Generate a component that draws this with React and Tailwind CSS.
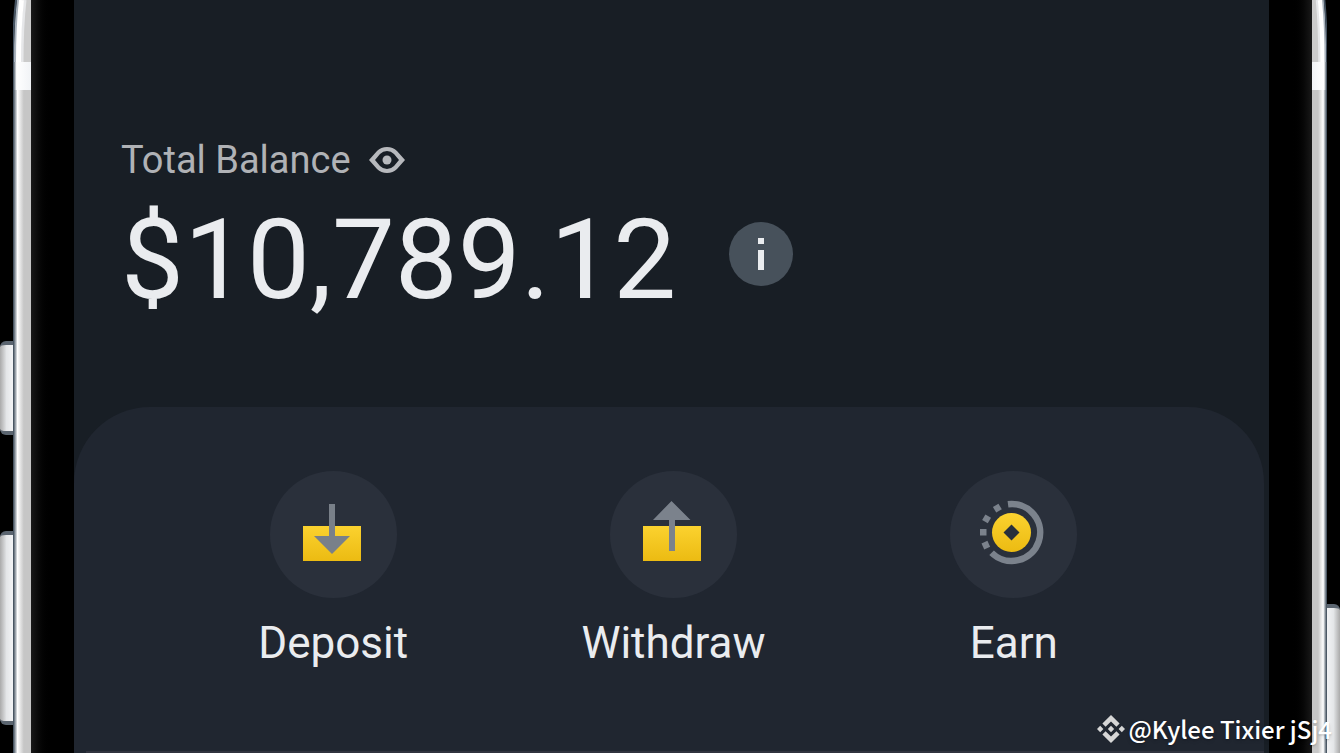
import clsx from 'clsx';

const DepositIcon = () => (
  <svg viewBox="0 0 127 127" className="w-full h-full" aria-hidden="true">
    <defs>
      <linearGradient id="deposit-gold" x1="0" y1="0" x2="0" y2="1">
        <stop offset="0" stopColor="#fbd22f" />
        <stop offset="1" stopColor="#ecbb12" />
      </linearGradient>
    </defs>
    <rect x="33" y="55" width="58" height="35" fill="url(#deposit-gold)" />
    <path d="M59 33h6v32h15L62 83 44 65h15z" fill="#798089" />
  </svg>
);

const WithdrawIcon = () => (
  <svg viewBox="0 0 127 127" className="w-full h-full" aria-hidden="true">
    <defs>
      <linearGradient id="withdraw-gold" x1="0" y1="0" x2="0" y2="1">
        <stop offset="0" stopColor="#fbd22f" />
        <stop offset="1" stopColor="#ecbb12" />
      </linearGradient>
    </defs>
    <rect x="33" y="55" width="58" height="35" fill="url(#withdraw-gold)" />
    <path d="M61.500 30L80.500 49H65v31h-6V49H43z" fill="#7b828c" />
  </svg>
);

const EarnIcon = () => (
  <svg viewBox="0 0 127 127" className="w-full h-full" aria-hidden="true">
    <defs>
      <linearGradient id="earn-gold" x1="0" y1="0" x2="0" y2="1">
        <stop offset="0" stopColor="#fbd22f" />
        <stop offset="1" stopColor="#ecbb12" />
      </linearGradient>
    </defs>
    <g fill="none" stroke="#7b828c" strokeWidth="6.500">
      <path d="M58 33.200A28.500 28.500 0 1 1 41.600 81.700" />
    </g>
    {/* Dashes closing the ring */}
    <g fill="#7b828c">
      <rect x="-3" y="-3" width="6.500" height="6.500" transform="translate(47 37) rotate(-31)" />
      <rect x="-3" y="-3" width="6.500" height="6.500" transform="translate(36.500 47.500) rotate(30)" />
      <rect x="-3" y="-3" width="6.500" height="6.500" transform="translate(33 61)" />
      <rect x="-3" y="-3" width="6.500" height="6.500" transform="translate(35.500 74) rotate(-25)" />
    </g>
    <circle cx="61.500" cy="61.500" r="19.500" fill="url(#earn-gold)" />
    <path d="M61.500 53.500l8 8-8 8-8-8z" fill="#28303b" />
  </svg>
);

const EyeIcon = () => (
  <svg viewBox="0 0 36 28" className="w-9 h-7" aria-hidden="true">
    <path
      fillRule="evenodd"
      d="M0 14L8 5Q12 1 18 1t10 4l8 9-8 9q-4 4-10 4T8 23zM6 14l5 6q3 3 7 3t7-3l5-6-5-6q-3-3-7-3t-7 3z"
      fill="#b7b9bd"
    />
    <circle cx="18" cy="14" r="4.500" fill="#b7b9bd" />
  </svg>
);

const InfoIcon = () => (
  <svg viewBox="0 0 64 64" className="w-full h-full" aria-hidden="true">
    <rect x="29" y="16" width="6" height="6" fill="#eaecef" />
    <rect x="29" y="28" width="6" height="20" fill="#eaecef" />
  </svg>
);

const BinanceMark = () => (
  <svg viewBox="0 0 28 28" className="w-7 h-7" fill="#d6d6d6" aria-hidden="true">
    <path d="M14 0l8.600 8.600-3.200 3.200L14 6.400l-5.400 5.400-3.200-3.200z" />
    <path d="M14 28l8.600-8.600-3.200-3.200L14 21.600l-5.400-5.400-3.200 3.200z" />
    <path d="M3.200 10.800L6.400 14l-3.200 3.200L0 14z" />
    <path d="M24.800 10.800L28 14l-3.200 3.200L21.600 14z" />
    <path d="M14 10.800l3.200 3.200-3.200 3.200-3.200-3.200z" />
  </svg>
);

// Top end of the metal rail, where it starts bending into the phone's corner
const RailBend = () => (
  <svg
    viewBox="0 0 18 62"
    preserveAspectRatio="none"
    className="block w-full h-[62px]"
    fill="none"
    aria-hidden="true"
  >
    <path d="M4 0Q1 26 1 62H18V0z" fill="#cbcbcb" />
    <path d="M12 0Q9 26 9 62" stroke="#e6e7e9" strokeWidth="3" />
    <path d="M8 0Q5 26 5 62" stroke="#ffffff" strokeWidth="6" />
    <path d="M5 0Q2 26 2 62" stroke="#a9b2bc" strokeWidth="2" />
    <path d="M3 0Q0 26 0 62" stroke="#465463" strokeWidth="2" />
  </svg>
);

const SideKey = ({ className }) => (
  <div
    className={clsx(
      'w-full rounded-l-md border-y-4 border-[#5b6570] bg-linear-to-r from-[#aaaaaa] via-[#e4e6e8] to-[#f2f3f5]',
      className
    )}
  ></div>
);

const Bezel = ({ flipped, children }) => (
  <div className={clsx('flex shrink-0', flipped ? 'w-[71px] -scale-x-100' : 'w-[74px]')}>
    <div className="w-[13px] shrink-0">{children}</div>
    <div className={clsx('shrink-0 flex flex-col', flipped ? 'w-[15px]' : 'w-[18px]')}>
      <RailBend />
      <div className="h-7 bg-linear-to-r from-[#344250] from-0% via-[#ffffff] via-20% to-[#f1f3f6]"></div>
      <div className="flex-1 bg-linear-to-r from-[#344250] from-0% via-[#ffffff] via-25% to-[#c6c6c6] to-60%"></div>
    </div>
    <div className="flex-1 bg-linear-to-r from-[#191919] to-black to-50%"></div>
  </div>
);

const actions = [
  { label: 'Deposit', Icon: DepositIcon },
  { label: 'Withdraw', Icon: WithdrawIcon },
  { label: 'Earn', Icon: EarnIcon }
];

export const App = () => {
  return (
    <div className="relative flex min-h-screen bg-black overflow-hidden font-['Roboto',sans-serif]">
      <Bezel>
        <SideKey className="mt-[341px] h-[94px]" />
        <SideKey className="mt-[96px] h-[194px]" />
      </Bezel>

      <main className="flex-1 min-w-0 flex flex-col bg-[#181e25]">
        {/* Balance */}
        <section className="pt-[140px] pl-[47px] pb-[91px]">
          <div className="flex items-center gap-[18px]">
            <h1 className="text-[38px] leading-10 font-normal text-[#b0b2b6]">Total Balance</h1>
            <button type="button" aria-label="Hide balance" className="cursor-pointer">
              <EyeIcon />
            </button>
          </div>
          <div className="mt-6 flex items-start gap-[53px]">
            <p className="text-[112px] leading-none text-[#eaecef]">$10,789.12</p>
            <button
              type="button"
              aria-label="Balance details"
              className="mt-[18px] w-16 h-16 rounded-full bg-[#47515b] cursor-pointer"
            >
              <InfoIcon />
            </button>
          </div>
        </section>

        {/* Quick actions */}
        <section className="flex-1 flex flex-col mr-[5px] rounded-t-[76px] bg-[#202630]">
          <div className="grid grid-cols-3 pt-16 pl-[89px] pr-20">
            {actions.map(({ label, Icon }) => (
              <button key={label} type="button" className="flex flex-col items-center gap-4 cursor-pointer">
                <span className="w-[127px] h-[127px] rounded-full bg-[#2a303b]">
                  <Icon />
                </span>
                <span className="text-[44px] leading-[58px] text-[#eaecef]">{label}</span>
              </button>
            ))}
          </div>
          <div className="mt-auto ml-3 h-0.5 bg-[#30333e]"></div>
        </section>
      </main>

      <Bezel flipped>
        <SideKey className="mt-[604px] h-[194px] -mb-[45px]" />
      </Bezel>

      {/* Author tag */}
      <a
        href="#author"
        className="absolute right-2 bottom-1 flex items-center gap-1 text-2xl leading-10 font-medium text-white font-['Noto_Sans_CJK_SC',sans-serif] text-shadow-md"
      >
        <BinanceMark />
        @Kylee Tixier jSj4
      </a>
    </div>
  );
};

export default App;
